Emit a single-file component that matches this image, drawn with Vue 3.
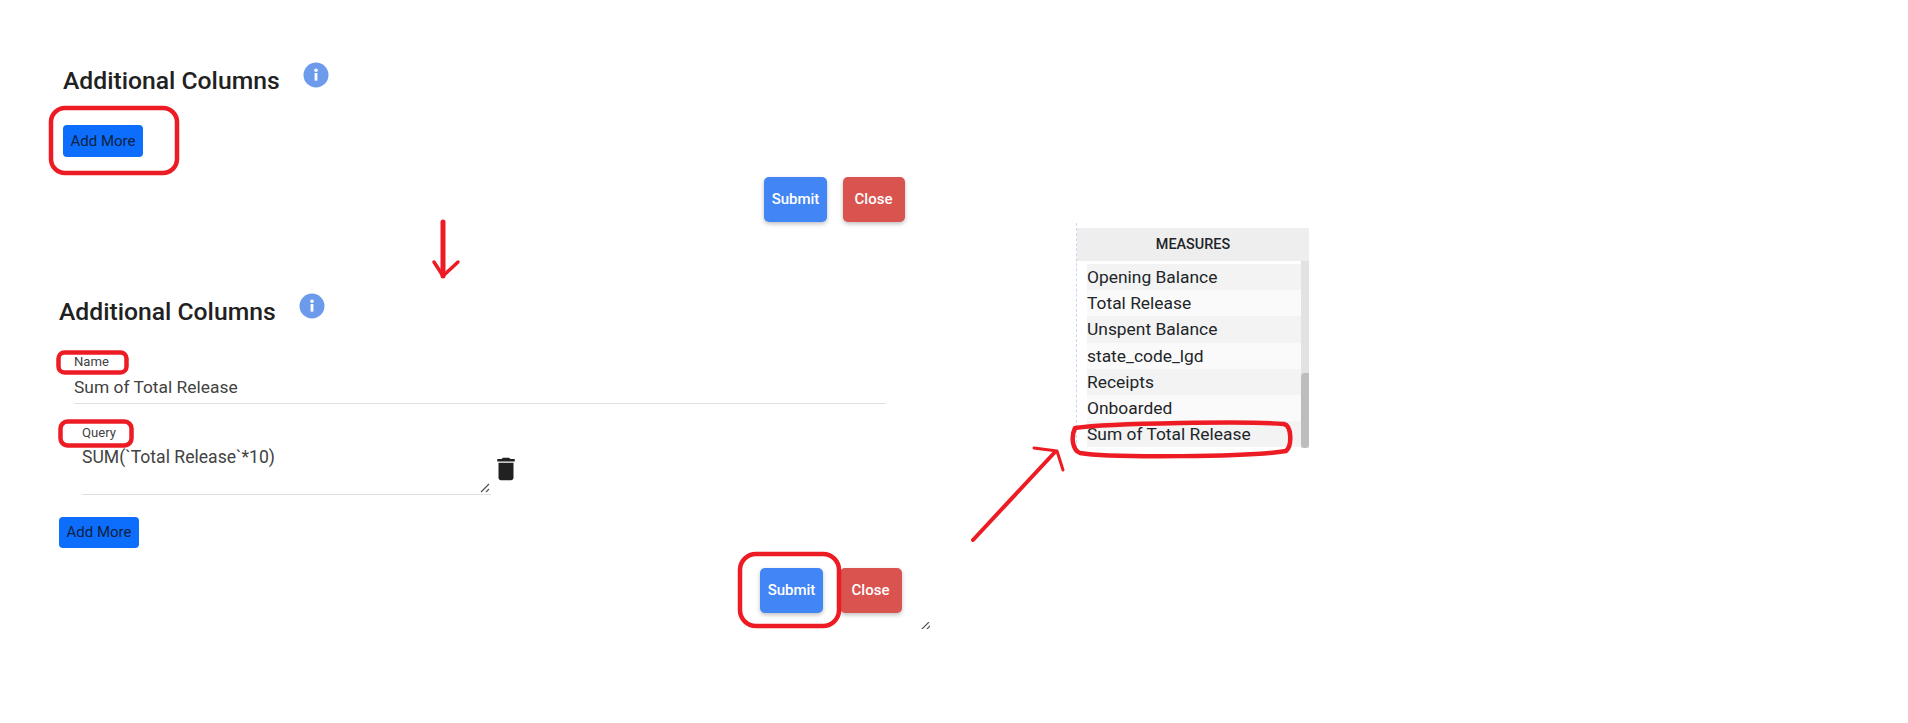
<script setup>
const measures = ['Opening Balance', 'Total Release', 'Unspent Balance', 'state_code_lgd', 'Receipts', 'Onboarded', 'Sum of Total Release']
</script>

<template>
  <div class="sheet">
    <div class="forms">
      <section class="form first">
        <div class="head">
          <h2>Additional Columns</h2>
          <svg class="info" width="26" height="26" viewBox="0 0 26 26">
            <circle cx="13" cy="13" r="12.5" fill="#6c9bec" />
            <circle cx="13" cy="8.2" r="1.8" fill="#fff" />
            <rect x="11.6" y="11" width="2.8" height="7.6" fill="#fff" />
          </svg>
        </div>
        <button class="add">Add More</button>
        <div class="actions">
          <button class="act submit">Submit</button>
          <button class="act close">Close</button>
        </div>
      </section>

      <section class="form second">
        <div class="head">
          <h2>Additional Columns</h2>
          <svg class="info" width="26" height="26" viewBox="0 0 26 26">
            <circle cx="13" cy="13" r="12.5" fill="#6c9bec" />
            <circle cx="13" cy="8.2" r="1.8" fill="#fff" />
            <rect x="11.6" y="11" width="2.8" height="7.6" fill="#fff" />
          </svg>
        </div>
        <div class="field name">
          <label>Name</label>
          <div class="value">Sum of Total Release</div>
        </div>
        <div class="query-row">
          <div class="field query">
            <label>Query</label>
            <div class="value">SUM(`Total Release`*10)</div>
            <svg class="grip" width="10" height="10" viewBox="0 0 10 10">
              <path d="M1 9 9 1M6 9 9 6" stroke="#555" stroke-width="1.2" fill="none" />
            </svg>
          </div>
          <svg class="trash" width="30" height="30" viewBox="0 0 24 24">
            <path fill="#212121" d="M6 19c0 1.1.9 2 2 2h8c1.1 0 2-.9 2-2V7H6v12zM19 4h-3.5l-1-1h-5l-1 1H5v2h14V4z" />
          </svg>
        </div>
        <button class="add">Add More</button>
        <div class="actions tight">
          <button class="act submit">Submit</button>
          <button class="act close">Close</button>
          <svg class="corner" width="10" height="7" viewBox="0 0 10 7">
            <path d="M1 8 9 0M6 8 10 4" stroke="#555" stroke-width="1.2" fill="none" />
          </svg>
        </div>
      </section>
    </div>

    <aside class="panel">
      <div class="panel-head">MEASURES</div>
      <div class="panel-body">
        <ul>
          <li v-for="m in measures" :key="m">{{ m }}</li>
        </ul>
        <div class="track"><div class="thumb"></div></div>
      </div>
    </aside>

    <svg class="marks" width="1908" height="723" viewBox="0 0 1908 723" fill="none" stroke="#ed1c24" stroke-width="4.5" stroke-linecap="round" stroke-linejoin="round">
      <rect x="51" y="108" width="126" height="65" rx="14" />
      <rect x="58.5" y="352.5" width="68" height="20" rx="6" />
      <rect x="60.5" y="421.5" width="71" height="24" rx="7" />
      <rect x="740" y="554" width="99" height="72" rx="16" />
      <path d="M1075 428C1110 423 1250 421 1284 424C1292 426 1292 446 1286 451C1250 457 1110 458 1080 453C1072 450 1071 436 1075 428Z" />
      <path d="M443 222V276" stroke-width="5" />
      <path d="M434 262 443 276 458 262" stroke-width="3.5" />
      <path d="M973 540 1055 452" stroke-width="4" />
      <path d="M1034 448 1057 451 1063 470" stroke-width="3" />
    </svg>
  </div>
</template>

<style scoped>
.sheet {
  position: relative;
  width: 1908px;
  height: 723px;
  display: flex;
  background: #fff;
  font-family: Roboto, "Liberation Sans", sans-serif;
  color: #212121;
  overflow: hidden;
}
.forms {
  width: 1076px;
  flex: none;
}
.form { display: flex; flex-direction: column; align-items: flex-start; }
.first { padding: 62px 0 0 63px; }
.second { padding: 71px 0 0 59px; }
.head { display: flex; align-items: flex-start; height: 35px; }
.head h2 {
  margin: 3px 0 0;
  font-size: 24.7px;
  font-weight: 500;
  line-height: 32px;
  color: #212121;
  width: 217px;
  white-space: nowrap;
}
.info { margin: 0 0 0 23px; flex: none; }
.first .head { margin-bottom: 28px; }
.add {
  width: 80px;
  height: 32px;
  padding: 0 0 1px;
  border: 0;
  border-radius: 4px;
  background: #0d6efd;
  color: #0f2242;
  font: 400 15px Roboto, sans-serif;
}
.second .add { height: 31px; }
.actions { display: flex; gap: 16px; align-self: stretch; padding-left: 701px; margin-top: 20px; position: relative; }
.act {
  height: 45px;
  padding: 0 0 2px;
  border: 0;
  border-radius: 5px;
  color: #fff;
  font: 500 15px Roboto, sans-serif;
  box-shadow: 0 2px 4px rgba(0, 0, 0, .25);
}
.submit { width: 63px; background: #4285f4; }
.close { width: 62px; background: #d9534f; padding-right: 1px; }
.tight { gap: 17px; margin-top: 20px; }
.corner { position: absolute; left: 861px; top: 54px; }
.field { position: relative; }
.field label { display: block; font-size: 13.1px; line-height: 14px; color: #424242; }
.value { font-size: 17.4px; line-height: 24px; color: #424242; }
.name { margin: 27px 0 0 15px; width: 812px; height: 48px; border-bottom: 1px solid #e0e0e0; }
.name .value { margin-top: 6px; }
.query-row { display: flex; align-items: flex-start; margin: 22px 0 0 23px; }
.query { width: 409px; height: 68px; border-bottom: 1px solid #e0e0e0; }
.query .value { margin-top: 5px; font-size: 17.6px; }
.grip { position: absolute; right: 1px; bottom: 1px; }
.trash { margin: 28px 0 0 0; flex: none; }
.query-row + .add { margin-top: 22px; }
.panel { width: 232px; margin-top: 223px; height: 225px; border-left: 1px dashed #c6d6f4; flex: none; align-self: flex-start; }
.panel-head {
  margin-top: 5px;
  height: 33px;
  line-height: 33px;
  background: #eee;
  text-align: center;
  font-size: 14.4px;
  font-weight: 500;
  color: #212529;
}
.panel-body { display: flex; height: 187px; }
.panel-body ul { list-style: none; margin: 0; padding: 3px 0 0 10px; flex: 1; }
.panel-body li {
  height: 26.2px;
  line-height: 26px;
  font-size: 17.4px;
  color: #212529;
  background: #fbfafa;
}
.panel-body li:nth-child(odd) { background: #f3f3f3; }
.track { width: 8px; background: #e2e2e2; display: flex; align-items: flex-end; }
.thumb { width: 8px; height: 75px; background: #bdbdbd; border-radius: 4px 0 4px 4px; }
.marks { position: absolute; left: 0; top: 0; pointer-events: none; }
</style>
